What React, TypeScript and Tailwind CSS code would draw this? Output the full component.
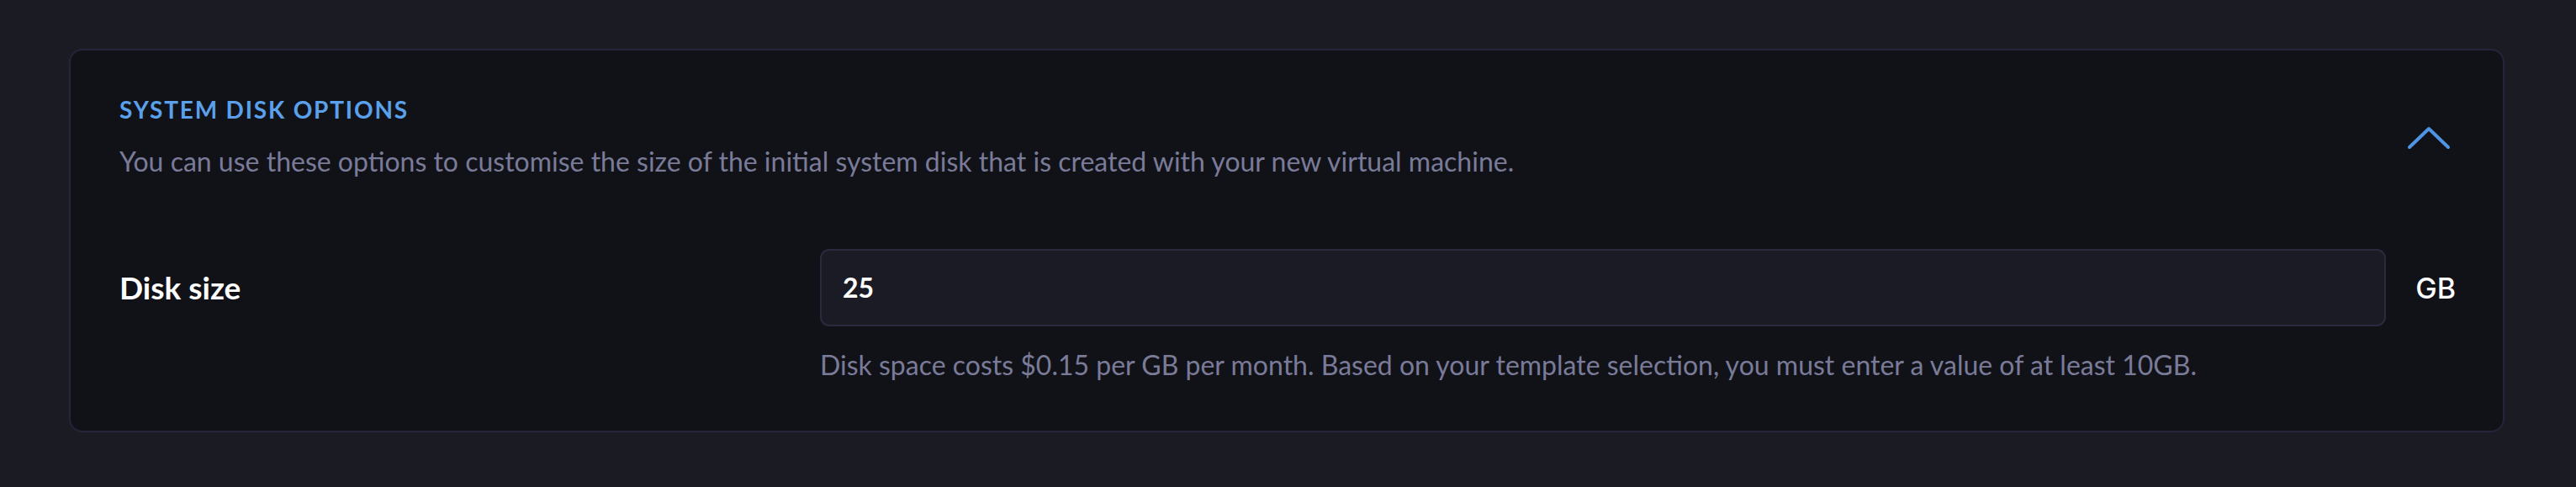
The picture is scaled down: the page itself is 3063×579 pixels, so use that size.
const FONT = "font-['Lato',_'Open_Sans',_sans-serif]";

function ChevronUp() {
  return (
    <svg
      width="52"
      height="30"
      viewBox="0 0 52 30"
      fill="none"
      aria-hidden="true"
      className="shrink-0"
    >
      <polyline
        points="3,27 26,5 49,27"
        stroke="#4f94e3"
        strokeWidth="4"
        strokeLinecap="round"
        strokeLinejoin="round"
      />
    </svg>
  );
}

export default function App() {
  return (
    <div className={`min-h-[579px] bg-[#1b1b24] pl-[82px] pr-[85px] pt-[58px] ${FONT}`}>
      <section className="rounded-[16px] border-2 border-[#25253a] bg-[#111218] pl-[58px] pr-[56px] pt-[50px] pb-[54px]">
        {/* Header */}
        <div className="flex items-center justify-between">
          <div>
            <h2 className="text-[28px] leading-[40px] font-bold uppercase tracking-[0.065em] text-[#5aa0ea]">
              System disk options
            </h2>
            <p className="mt-[18px] text-[32px] leading-[48px] text-[#7a7b98]">
              You can use these options to customise the size of the initial
              system disk that is created with your new virtual machine.
            </p>
          </div>
          <div className="mr-[6px]">
            <ChevronUp />
          </div>
        </div>

        {/* Disk size row */}
        <div className="mt-[80px] flex">
          <div className="flex h-[92px] w-[833px] shrink-0 items-center">
            <label className="text-[37px] font-bold text-white">Disk size</label>
          </div>
          <div className="min-w-0 flex-1">
            <div className="flex items-center gap-[35px]">
              <div className="flex h-[92px] flex-1 items-center rounded-[11px] border-2 border-[#2a2a3e] bg-[#1b1b25] pl-[25px]">
                <span className="text-[32px] font-bold text-white">25</span>
              </div>
              <span className="font-['Inter',_sans-serif] text-[34px] font-medium text-white">
                GB
              </span>
            </div>
            <p className="mt-[22px] text-[32px] leading-[48px] text-[#7a7b98]">
              Disk space costs $0.15 per GB per month. Based on your template
              selection, you must enter a value of at least 10GB.
            </p>
          </div>
        </div>
      </section>
    </div>
  );
}
